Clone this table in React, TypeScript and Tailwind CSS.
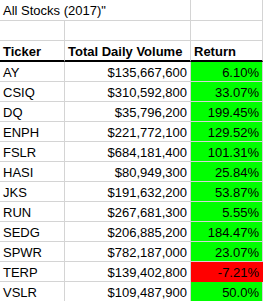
const rows: [string, string, string, boolean][] = [
  ["AY", "$135,667,600", "6.10%", true],
  ["CSIQ", "$310,592,800", "33.07%", true],
  ["DQ", "$35,796,200", "199.45%", true],
  ["ENPH", "$221,772,100", "129.52%", true],
  ["FSLR", "$684,181,400", "101.31%", true],
  ["HASI", "$80,949,300", "25.84%", true],
  ["JKS", "$191,632,200", "53.87%", true],
  ["RUN", "$267,681,300", "5.55%", true],
  ["SEDG", "$206,885,200", "184.47%", true],
  ["SPWR", "$782,187,000", "23.07%", true],
  ["TERP", "$139,402,800", "-7.21%", false],
  ["VSLR", "$109,487,900", "50.0%", true],
];

const cell = "flex items-end border-r border-b border-[#d4d4d4] pb-[2px] leading-none";

export default function App() {
  return (
    <div className="h-[301px] w-[263px] overflow-hidden bg-white text-[13px] text-black [font-family:'Liberation_Sans',Arial,sans-serif]">
      <div className="grid grid-cols-[65px_126px_72px]">
        <div className={`${cell} col-span-2 h-[21px] pl-[3px] pb-[3px]`}>All Stocks (2017)"</div>
        <div className={`${cell} h-[21px]`} />

        <div className={`${cell} h-[20px]`} />
        <div className={`${cell} h-[20px]`} />
        <div className={`${cell} h-[20px]`} />

        <div className={`${cell} h-[21px] border-b-2 border-b-black pl-[3px] font-bold`}>Ticker</div>
        <div className={`${cell} h-[21px] border-b-2 border-b-black pl-[3px] font-bold`}>Total Daily Volume</div>
        <div className={`${cell} h-[21px] border-b-2 border-b-black pl-[3px] font-bold`}>Return</div>

        {rows.map(([ticker, volume, ret, up]) => (
          <div key={ticker} className="contents">
            <div className={`${cell} h-[20px] pl-[3px]`}>{ticker}</div>
            <div className={`${cell} h-[20px] justify-end pr-[3px]`}>{volume}</div>
            <div
              className={`${cell} h-[20px] justify-end pr-[3px] ${
                up ? "border-[#00ff00] bg-[#00ff00]" : "border-[#ff0000] bg-[#ff0000]"
              }`}
            >
              {ret}
            </div>
          </div>
        ))}
      </div>
    </div>
  );
}
